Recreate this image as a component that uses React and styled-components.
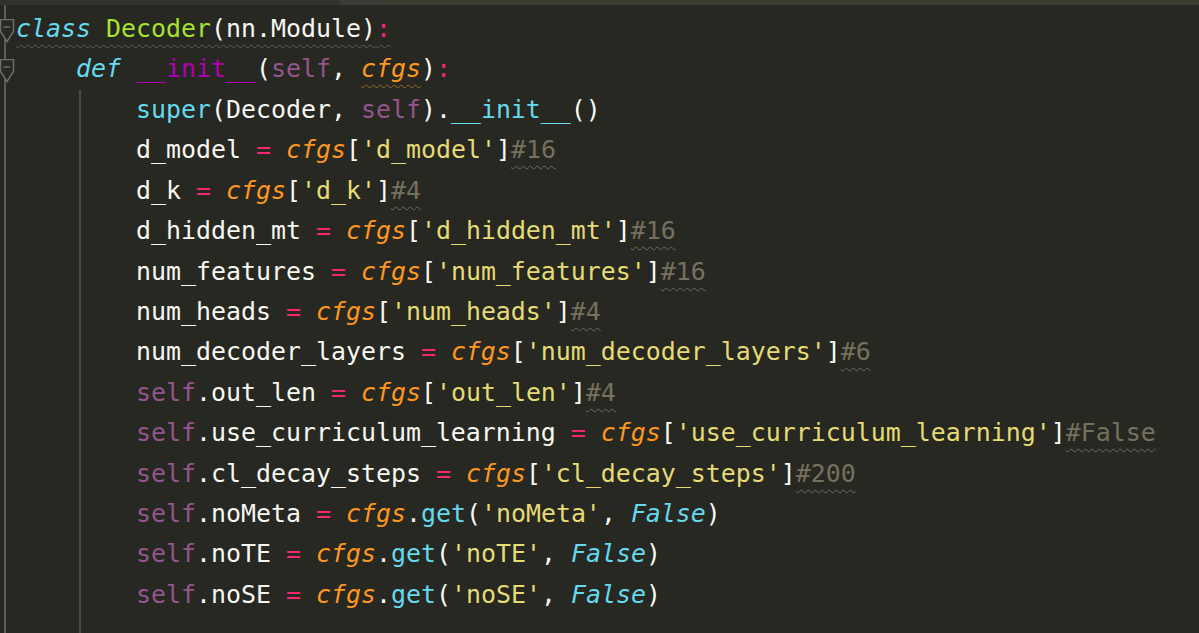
import React from "react";
import styled, { createGlobalStyle, css } from "styled-components";

const GlobalStyle = createGlobalStyle`
  html, body {
    margin: 0;
    padding: 0;
    background: #272822;
  }
`;

const Window = styled.div`
  height: 100vh;
  display: flex;
  flex-direction: column;
  background: #272822;
  overflow: hidden;
`;

const TopStrip = styled.div`
  height: 5px;
  display: flex;
  flex-shrink: 0;
`;

const StripPart = styled.div`
  height: 100%;
  width: ${props => props.$width || "auto"};
  flex: ${props => (props.$width ? "none" : 1)};
  background: ${props => props.$color};
`;

const Body = styled.div`
  flex: 1;
  display: flex;
  padding-top: 4px;
  background: linear-gradient(
    to right,
    transparent 4px,
    #5a5a58 4px,
    #5a5a58 6px,
    transparent 6px
  );
`;

const Gutter = styled.div`
  width: 16px;
  flex-shrink: 0;
  display: flex;
  flex-direction: column;
`;

const GutterCell = styled.div`
  height: 40.43px;
  padding-top: 10px;
  box-sizing: border-box;
`;

const Code = styled.div`
  flex: 1;
  display: flex;
  flex-direction: column;
  font-family: "DejaVu Sans Mono", "Liberation Mono", monospace;
  font-size: 24.92px;
  color: #f8f8f2;
`;

const guide = css`
  background: linear-gradient(
    to right,
    transparent 63px,
    #4b4b46 63px,
    #4b4b46 65px,
    transparent 65px
  );
`;

const Line = styled.div`
  height: 40.43px;
  line-height: 40px;
  white-space: pre;
  ${props => props.$guide && guide}
`;

const Filler = styled.div`
  flex: 1;
  ${guide}
`;

const kinds = {
  p: "color: #f8f8f2;",
  k: "color: #66d9ef; font-style: italic;",
  b: "color: #66d9ef;",
  c: "color: #a6e22e;",
  o: "color: #f92672;",
  m: "color: #b000b4;",
  s: "color: #94558d;",
  a: "color: #fd971f; font-style: italic;",
  q: "color: #e6db74;",
  h: "color: #75715e;",
};

const Tok = styled.span`
  ${props => kinds[props.$kind]}
  ${props =>
    props.$wavy &&
    css`
      text-decoration: underline wavy ${props.$wavy};
      text-decoration-thickness: 1px;
      text-underline-offset: 7px;
      text-decoration-skip-ink: none;
    `}
`;

const WholeLine = styled.span`
  text-decoration: underline wavy #5c5c54;
  text-decoration-thickness: 1px;
  text-underline-offset: 7px;
  text-decoration-skip-ink: none;
`;

const FoldMarker = () => (
  <svg width="15" height="25" viewBox="0 0 15 25">
    <path
      d="M0.5 0.5 H13.5 V12.5 L7 22.5 L0.5 12.5 Z"
      fill="#272822"
      stroke="#6b6b68"
      strokeWidth="1.5"
    />
    <path d="M3.5 8 H10" stroke="#6b6b68" strokeWidth="1.5" />
  </svg>
);

const assign = (name, key, comment, selfPrefix) => [
  ...(selfPrefix ? [["s", "self"], ["p", "."]] : []),
  ["p", name + " "],
  ["o", "="],
  ["p", " "],
  ["a", "cfgs"],
  ["p", "["],
  ["q", `'${key}'`],
  ["p", "]"],
  ["h", comment, "#6a6a5e"],
];

const getLine = (name, key) => [
  ["s", "self"],
  ["p", "." + name + " "],
  ["o", "="],
  ["p", " "],
  ["a", "cfgs"],
  ["p", "."],
  ["b", "get"],
  ["p", "("],
  ["q", `'${key}'`],
  ["p", ", "],
  ["k", "False"],
  ["p", ")"],
];

const I8 = "        ";

const lines = [
  {
    indent: "",
    whole: true,
    fold: true,
    tokens: [
      ["k", "class"],
      ["p", " "],
      ["c", "Decoder"],
      ["p", "(nn.Module)"],
      ["o", ":"],
    ],
  },
  {
    indent: "    ",
    fold: true,
    tokens: [
      ["k", "def"],
      ["p", " "],
      ["m", "__init__"],
      ["p", "("],
      ["s", "self"],
      ["p", ", "],
      ["a", "cfgs", "#9a6a2c"],
      ["p", ")"],
      ["o", ":"],
    ],
  },
  {
    indent: I8,
    tokens: [
      ["b", "super"],
      ["p", "(Decoder, "],
      ["s", "self"],
      ["p", ")."],
      ["b", "__init__"],
      ["p", "()"],
    ],
  },
  { indent: I8, tokens: assign("d_model", "d_model", "#16") },
  { indent: I8, tokens: assign("d_k", "d_k", "#4") },
  { indent: I8, tokens: assign("d_hidden_mt", "d_hidden_mt", "#16") },
  { indent: I8, tokens: assign("num_features", "num_features", "#16") },
  { indent: I8, tokens: assign("num_heads", "num_heads", "#4") },
  {
    indent: I8,
    tokens: assign("num_decoder_layers", "num_decoder_layers", "#6"),
  },
  { indent: I8, tokens: assign("out_len", "out_len", "#4", true) },
  {
    indent: I8,
    tokens: assign(
      "use_curriculum_learning",
      "use_curriculum_learning",
      "#False",
      true
    ),
  },
  {
    indent: I8,
    tokens: assign("cl_decay_steps", "cl_decay_steps", "#200", true),
  },
  { indent: I8, tokens: getLine("noMeta", "noMeta") },
  { indent: I8, tokens: getLine("noTE", "noTE") },
  { indent: I8, tokens: getLine("noSE", "noSE") },
];

const renderTokens = tokens =>
  tokens.map(([kind, text, wavy], i) => (
    <Tok key={i} $kind={kind} $wavy={wavy}>
      {text}
    </Tok>
  ));

const App = () => {
  return (
    <Window>
      <GlobalStyle />
      <TopStrip>
        <StripPart $width="340px" $color="#32322c" />
        <StripPart $width="40px" $color="#3b3b3a" />
        <StripPart $color="#3e3d31" />
      </TopStrip>
      <Body>
        <Gutter>
          {lines.map((line, i) => (
            <GutterCell key={i}>{line.fold && <FoldMarker />}</GutterCell>
          ))}
        </Gutter>
        <Code>
          {lines.map((line, i) => (
            <Line key={i} $guide={i >= 2}>
              {line.indent}
              {line.whole ? (
                <WholeLine>{renderTokens(line.tokens)}</WholeLine>
              ) : (
                renderTokens(line.tokens)
              )}
            </Line>
          ))}
          <Filler />
        </Code>
      </Body>
    </Window>
  );
};

export default App;
